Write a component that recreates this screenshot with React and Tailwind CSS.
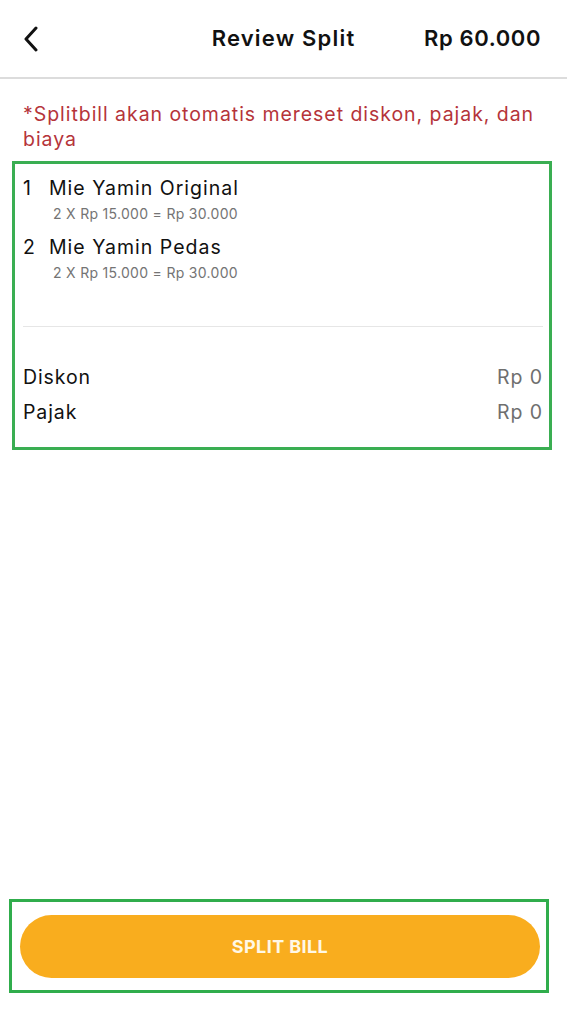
import React from 'react'

const items = [
    { no: 1, name: 'Mie Yamin Original', detail: '2 X Rp 15.000 = Rp 30.000' },
    { no: 2, name: 'Mie Yamin Pedas', detail: '2 X Rp 15.000 = Rp 30.000' },
]

const BackIcon = () => (
    <svg width="18" height="26" viewBox="0 0 18 26" fill="none">
        <path d="M14 2 L4 13 L14 24" stroke="#111" strokeWidth="3" strokeLinecap="round" strokeLinejoin="round" />
    </svg>
)

export default function App() {
    return (
        <div className="flex flex-col h-[1024px] bg-white font-['Inter',sans-serif] text-[#111]">
            {/* Header */}
            <header className="relative flex items-center justify-between h-[79px] border-b-2 border-[#dcdcdc] pl-[22px] pr-[26px]">
                <button className="flex items-center">
                    <BackIcon />
                </button>
                <h1 className="absolute left-1/2 -translate-x-1/2 text-[22px] font-semibold tracking-[1.2px]">Review Split</h1>
                <span className="text-[22px] font-semibold tracking-[0.6px]">Rp 60.000</span>
            </header>

            {/* Warning */}
            <p className="mt-[23px] px-[23px] text-[19.5px] leading-[25px] tracking-[0.95px] text-[#b5343a]">
                *Splitbill akan otomatis mereset diskon, pajak, dan biaya
            </p>

            {/* Items box */}
            <div className="ml-[12px] mr-[15px] mt-[9px] h-[289px] border-[3px] border-[#3aae52] pl-[8px] pr-[6px]">
                <div className="pt-[11px]">
                    {items.map((it) => (
                        <div key={it.no} className="mb-[10px]">
                            <div className="flex text-[19.5px] leading-[26px] tracking-[1px]">
                                <span className="w-[26px]">{it.no}</span>
                                <span>{it.name}</span>
                            </div>
                            <p className="mt-[3px] pl-[30px] text-[14px] leading-[20px] tracking-[0.3px] text-[#747474]">{it.detail}</p>
                        </div>
                    ))}
                </div>
                <hr className="mt-[43px] border-[#e6e6e6]" />
                <div className="mt-[37px] flex flex-col gap-[9px] text-[19.5px] leading-[26px] tracking-[0.9px]">
                    <div className="flex justify-between">
                        <span>Diskon</span>
                        <span className="text-[#6f6f6f]">Rp 0</span>
                    </div>
                    <div className="flex justify-between">
                        <span>Pajak</span>
                        <span className="text-[#6f6f6f]">Rp 0</span>
                    </div>
                </div>
            </div>

            {/* Button */}
            <div className="mt-auto mb-[31px] ml-[9px] mr-[18px] border-[3px] border-[#30ad4c] pl-[8px] pr-[6px] pt-[13px] pb-[12px]">
                <button className="w-full h-[63px] rounded-full bg-[#f9ad1e] text-[18px] font-bold text-[#fff8e6] tracking-[0.4px]">
                    SPLIT BILL
                </button>
            </div>
        </div>
    )
}
